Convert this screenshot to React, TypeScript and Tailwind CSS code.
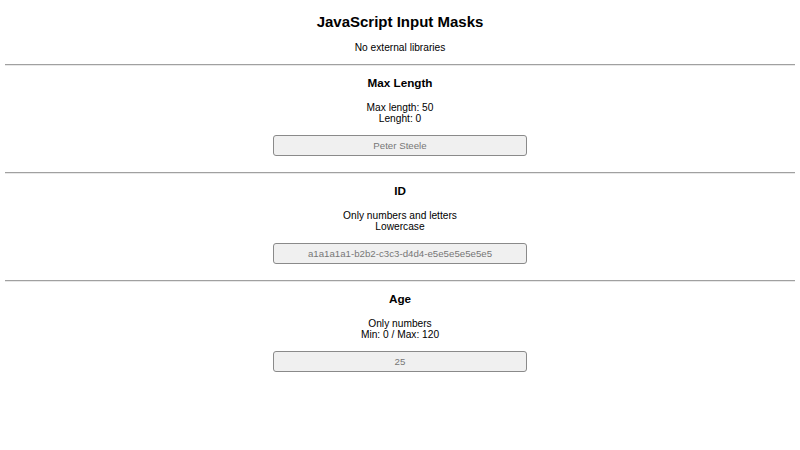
import React from 'react'

const sections = [
  { title: 'Max Length', lines: ['Max length: 50', 'Lenght: 0'], placeholder: 'Peter Steele' },
  { title: 'ID', lines: ['Only numbers and letters', 'Lowercase'], placeholder: 'a1a1a1a1-b2b2-c3c3-d4d4-e5e5e5e5e5e5' },
  { title: 'Age', lines: ['Only numbers', 'Min: 0 / Max: 120'], placeholder: '25' },
]

function Rule() {
  return <div className="mx-[5px] h-[2px] border-t border-b border-t-[#a0a0a0] border-b-[#e8e8e8]" />
}

export default function App() {
  return (
    <div className="w-[800px] h-[450px] bg-white text-black font-['Liberation_Sans',Arial,sans-serif] text-[10.2px] text-center">
      <h1 className="pt-[13px] text-[15px] leading-[18px] font-bold">JavaScript Input Masks</h1>
      <p className="mt-[11px] leading-[12px]">No external libraries</p>
      <div className="mt-[10px]" />

      {sections.map((s) => (
        <div key={s.title}>
          <Rule />
          <div className="flex flex-col items-center">
            <h3 className="mt-[10px] text-[11.7px] leading-[14px] font-bold">{s.title}</h3>
            <div className="mt-[12px] leading-[11px]">
              {s.lines.map((l) => (
                <div key={l}>{l}</div>
              ))}
            </div>
            <input
              className="mt-[11px] w-[254px] h-[21px] rounded-[3px] border border-[#8a8a8a] bg-[#f0f0f0] text-center text-[9.7px] placeholder:text-[#777] outline-none"
              placeholder={s.placeholder}
            />
            <div className="h-[16px]" />
          </div>
        </div>
      ))}
    </div>
  )
}
